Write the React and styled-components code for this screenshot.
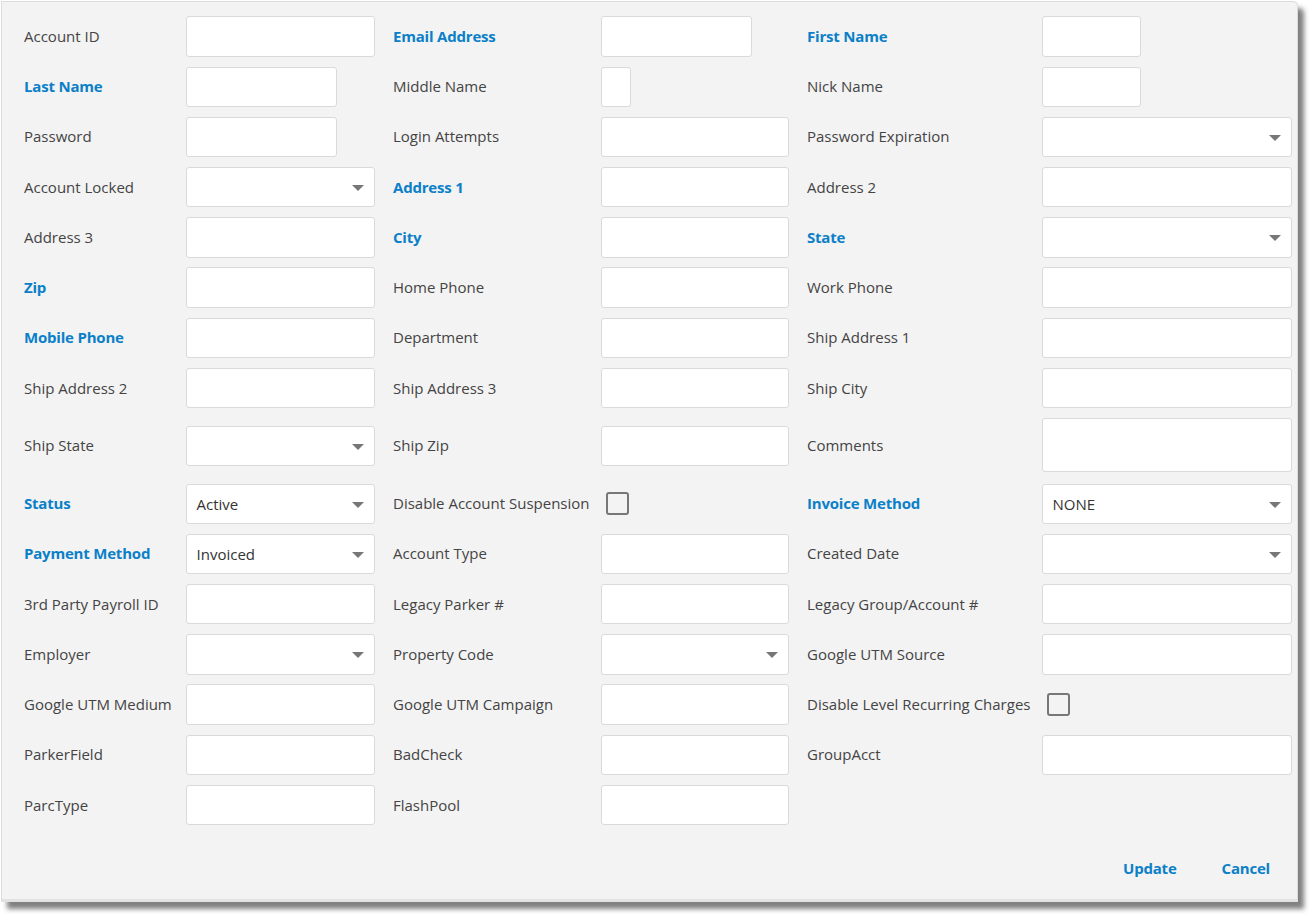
import React from "react";
import styled, { createGlobalStyle, css } from "styled-components";

const Global = createGlobalStyle`
  html, body { margin: 0; padding: 0; background: #ffffff; }
  body { font-family: "Open Sans", "Noto Sans", sans-serif; }
  * { box-sizing: border-box; }
`;

const Page = styled.div`
  min-height: 921px;
  padding: 1px 0 0 1px;
`;

const Panel = styled.div`
  width: 1297px;
  height: 901px;
  background: #f3f3f3;
  border: 1px solid #dcdcdc;
  border-bottom: 3px solid #e2e2e2;
  border-radius: 0 5px 0 0;
  box-shadow: 6px 7px 5px rgba(60, 60, 60, 0.65);
  padding: 14.3px 6px 0 22px;
  display: flex;
  flex-direction: column;
`;

const Grid = styled.div`
  display: grid;
  grid-template-columns: 162px 189px 18px 208px 188px 18px 235px 250px;
  row-gap: 9.95px;
  align-items: center;
`;

const Label = styled.div`
  font-size: 15px;
  line-height: 20px;
  padding-bottom: 1px;
  color: ${(p) => (p.$req ? "#0b80c8" : "#444444")};
  font-weight: ${(p) => (p.$req ? 700 : 400)};
  white-space: nowrap;
  grid-column: ${(p) => p.$col};
  letter-spacing: ${(p) => (p.$req ? "-0.2px" : "0")};
`;

const Cell = styled.div`
  grid-column: ${(p) => p.$col};
  display: flex;
  align-items: center;
  padding-bottom: ${(p) => (p.$tall ? "1.4px" : "0")};
`;

const boxBase = css`
  background: #ffffff;
  border: 1px solid #dadada;
  border-radius: 3px;
  height: 40.3px;
`;

const TextBox = styled.div`
  ${boxBase};
  width: ${(p) => p.$w || "100%"};
`;

const TextArea = styled.div`
  ${boxBase};
  width: 100%;
  height: 54px;
`;

const Select = styled.div`
  ${boxBase};
  width: 100%;
  position: relative;
  display: flex;
  align-items: center;
  padding-left: 9.5px;
  font-size: 15px;
  color: #333333;
`;

const Arrow = styled.span`
  position: absolute;
  right: 10px;
  top: 50%;
  margin-top: -2px;
  width: 0;
  height: 0;
  border-left: 6px solid transparent;
  border-right: 6px solid transparent;
  border-top: 6px solid #777777;
`;

const Check = styled.div`
  width: 23px;
  height: 23px;
  margin-left: 5px;
  border: 2.5px solid #777777;
  border-radius: 3px;
  background: #f3f3f3;
`;

const Footer = styled.div`
  margin-top: auto;
  margin-bottom: 21px;
  display: flex;
  justify-content: flex-end;
  gap: 45px;
  padding-right: 21px;
`;

const LinkButton = styled.button`
  background: none;
  border: none;
  padding: 0;
  font-family: inherit;
  font-size: 15px;
  letter-spacing: -0.2px;
  font-weight: 700;
  color: #0b80c8;
  cursor: pointer;
`;

const rows = [
  [
    { l: "Account ID", t: "text" },
    { l: "Email Address", r: 1, t: "text", w: "151px" },
    { l: "First Name", r: 1, t: "text", w: "99px" },
  ],
  [
    { l: "Last Name", r: 1, t: "text", w: "151px" },
    { l: "Middle Name", t: "text", w: "30px" },
    { l: "Nick Name", t: "text", w: "99px" },
  ],
  [
    { l: "Password", t: "text", w: "151px" },
    { l: "Login Attempts", t: "text" },
    { l: "Password Expiration", t: "select" },
  ],
  [
    { l: "Account Locked", t: "select" },
    { l: "Address 1", r: 1, t: "text" },
    { l: "Address 2", t: "text" },
  ],
  [
    { l: "Address 3", t: "text" },
    { l: "City", r: 1, t: "text" },
    { l: "State", r: 1, t: "select" },
  ],
  [
    { l: "Zip", r: 1, t: "text" },
    { l: "Home Phone", t: "text" },
    { l: "Work Phone", t: "text" },
  ],
  [
    { l: "Mobile Phone", r: 1, t: "text" },
    { l: "Department", t: "text" },
    { l: "Ship Address 1", t: "text" },
  ],
  [
    { l: "Ship Address 2", t: "text" },
    { l: "Ship Address 3", t: "text" },
    { l: "Ship City", t: "text" },
  ],
  [
    { l: "Ship State", t: "select" },
    { l: "Ship Zip", t: "text" },
    { l: "Comments", t: "area" },
  ],
  [
    { l: "Status", r: 1, t: "select", v: "Active" },
    { l: "Disable Account Suspension", t: "check" },
    { l: "Invoice Method", r: 1, t: "select", v: "NONE" },
  ],
  [
    { l: "Payment Method", r: 1, t: "select", v: "Invoiced" },
    { l: "Account Type", t: "text" },
    { l: "Created Date", t: "select" },
  ],
  [
    { l: "3rd Party Payroll ID", t: "text" },
    { l: "Legacy Parker #", t: "text" },
    { l: "Legacy Group/Account #", t: "text" },
  ],
  [
    { l: "Employer", t: "select" },
    { l: "Property Code", t: "select" },
    { l: "Google UTM Source", t: "text" },
  ],
  [
    { l: "Google UTM Medium", t: "text" },
    { l: "Google UTM Campaign", t: "text" },
    { l: "Disable Level Recurring Charges", t: "check" },
  ],
  [
    { l: "ParkerField", t: "text" },
    { l: "BadCheck", t: "text" },
    { l: "GroupAcct", t: "text" },
  ],
  [
    { l: "ParcType", t: "text" },
    { l: "FlashPool", t: "text" },
    null,
  ],
];

function Control({ f }) {
  if (f.t === "select")
    return (
      <Select>
        {f.v || ""}
        <Arrow />
      </Select>
    );
  if (f.t === "area") return <TextArea />;
  if (f.t === "check") return <Check />;
  return <TextBox $w={f.w} />;
}

export default function App() {
  return (
    <>
      <Global />
      <Page>
        <Panel>
          <Grid>
            {rows.map((row, ri) =>
              row.map((f, ci) => {
                if (!f) return null;
                const lc = ci * 3 + 1;
                return (
                  <React.Fragment key={`${ri}-${ci}`}>
                    <Label $col={lc} $req={f.r}>
                      {f.l}
                    </Label>
                    <Cell $col={lc + 1} $tall={f.t === "area"}>
                      <Control f={f} />
                    </Cell>
                  </React.Fragment>
                );
              })
            )}
          </Grid>
          <Footer>
            <LinkButton>Update</LinkButton>
            <LinkButton>Cancel</LinkButton>
          </Footer>
        </Panel>
      </Page>
    </>
  );
}
